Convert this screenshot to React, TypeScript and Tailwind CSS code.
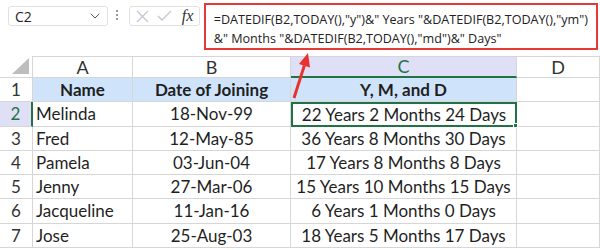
import React from 'react';
import { ChevronDown } from 'lucide-react';

const rows = [
  ['Melinda', '18-Nov-99', '22 Years 2 Months 24 Days'],
  ['Fred', '12-May-85', '36 Years 8 Months 30 Days'],
  ['Pamela', '03-Jun-04', '17 Years 8 Months 8 Days'],
  ['Jenny', '27-Mar-06', '15 Years 10 Months 15 Days'],
  ['Jacqueline', '11-Jan-16', '6 Years 1 Months 0 Days'],
  ['Jose', '25-Aug-03', '18 Years 5 Months 17 Days'],
];

const cell = 'border-r border-b border-[#d6d6d6] flex items-center';

const App: React.FC = () => {
  return (
    <div className="relative w-[600px] h-[250px] overflow-hidden bg-white text-[#1f1f1f] font-['Lato',sans-serif]">
      {/* formula bar */}
      <div className="flex items-start h-[56px] pl-[8px] pr-[2px]">
        <div className="mt-[6px] w-[100px] h-[20px] rounded-[3px] border border-[#e1e1e1] flex items-center justify-between pl-[6px] pr-[4px] text-[14px] font-['Open_Sans',sans-serif]">
          <span>C2</span>
          <ChevronDown className="h-4 w-4 text-[#555]" strokeWidth={1.5} />
        </div>
        <div className="mt-[10px] ml-[8px] flex flex-col gap-[2px]">
          <span className="block h-[2px] w-[2px] bg-[#999]" />
          <span className="block h-[2px] w-[2px] bg-[#999]" />
          <span className="block h-[2px] w-[2px] bg-[#999]" />
        </div>
        <div className="mt-[6px] ml-[11px] w-[71px] h-[20px] rounded-[3px] border border-[#e1e1e1] flex items-center pl-[6px] gap-[8px]">
          <svg width="13" height="13" viewBox="0 0 13 13" className="text-[#c4c4d4]">
            <path d="M1 1L12 12M12 1L1 12" stroke="currentColor" strokeWidth="1.3" fill="none" />
          </svg>
          <svg width="15" height="12" viewBox="0 0 15 12" className="text-[#c4c4d4]">
            <path d="M1 6L5 10L14 1" stroke="currentColor" strokeWidth="1.3" fill="none" />
          </svg>
          <span className="text-[16px] italic font-['Liberation_Serif',serif] text-[#333] leading-none ml-[2px]">fx</span>
        </div>
        <div className="mt-[3px] ml-[4px] flex-1 h-[47px] border-2 border-[#e53935] px-[8px] pt-[5px] text-[12.6px] leading-[19px] font-['Open_Sans',sans-serif] text-[#222] whitespace-nowrap">
          <div>=DATEDIF(B2,TODAY(),"y")&amp;" Years "&amp;DATEDIF(B2,TODAY(),"ym")</div>
          <div>&amp;" Months "&amp;DATEDIF(B2,TODAY(),"md")&amp;" Days"</div>
        </div>
      </div>

      {/* sheet */}
      <div className="grid grid-cols-[33px_100px_158px_226px_83px] grid-rows-[22px_repeat(7,24.3px)] text-[17px]">
        <div className={`${cell} relative`}>
          <svg width="17" height="16" viewBox="0 0 17 16" className="absolute right-[3px] bottom-[3px]">
            <polygon points="17,0 17,16 0,16" fill="#bdbdbd" />
          </svg>
        </div>
        <div className={`${cell} justify-center border-t text-[#333] text-[18px]`}>A</div>
        <div className={`${cell} justify-center border-t text-[#333] text-[18px]`}>B</div>
        <div className={`${cell} justify-center border-t bg-[#dfe0f5] text-[#217346] text-[18px] border-b-2 border-b-[#217346]`}>C</div>
        <div className={`${cell} justify-center border-t text-[#333] text-[18px]`}>D</div>

        <div className={`${cell} justify-center text-[#333]`}>1</div>
        <div className={`${cell} justify-center font-bold bg-[#cfe4fb]`}>Name</div>
        <div className={`${cell} justify-center font-bold bg-[#cfe4fb]`}>Date of Joining</div>
        <div className={`${cell} justify-center font-bold bg-[#cfe4fb]`}>Y, M, and D</div>
        <div className={cell} />

        {rows.map((r, i) => (
          <React.Fragment key={i}>
            <div
              className={
                i === 0
                  ? `${cell} justify-center bg-[#dfe0f5] text-[#217346] border-r-2 border-r-[#217346]`
                  : `${cell} justify-center text-[#333]`
              }
            >
              {i + 2}
            </div>
            <div className={`${cell} pl-[3px]`}>{r[0]}</div>
            <div className={`${cell} justify-center`}>{r[1]}</div>
            {i === 0 ? (
              <div className="relative flex items-center justify-center border-2 border-[#217346]">
                {r[2]}
                <span className="absolute -right-[3px] -bottom-[3px] h-[5px] w-[5px] bg-[#217346] border border-white" />
              </div>
            ) : (
              <div className={`${cell} justify-center`}>{r[2]}</div>
            )}
            <div className={cell} />
          </React.Fragment>
        ))}
      </div>

      {/* arrow pointing to the formula */}
      <svg className="absolute left-0 top-0 pointer-events-none" width="600" height="250">
        <line x1="294" y1="98" x2="304.4" y2="65.4" stroke="#e8322f" strokeWidth="3" />
        <polygon points="308,53 310,67.5 299,64" fill="#e8322f" />
      </svg>
    </div>
  );
};

export default App;
